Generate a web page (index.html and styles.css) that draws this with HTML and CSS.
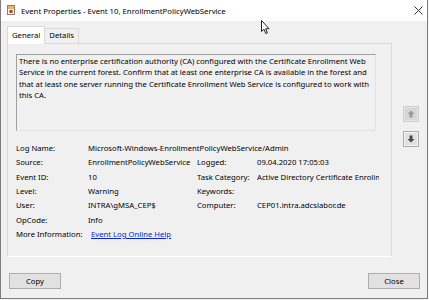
FILE: index.html
```html
<!DOCTYPE html>
<html lang="en">
<head>
    <meta charset="UTF-8">
    <meta name="viewport" content="width=device-width, initial-scale=1.0">
    <title>Event Properties</title>
    <link rel="stylesheet" href="styles.css">
</head>
<body>

<div class="window">
    <div class="title-bar">
        <svg class="title-icon" width="8" height="10" viewBox="0 0 8 10">
            <rect x="0.5" y="0.5" width="7" height="9" fill="#f4f1e6" stroke="#8a8070"/>
            <rect x="1" y="1" width="6" height="3" fill="#e8b84a"/>
            <circle cx="4" cy="6.5" r="1.8" fill="#d0342c"/>
        </svg>
        <span class="title-text">Event Properties - Event 10, EnrollmentPolicyWebService</span>
        <svg class="title-close" width="9" height="9" viewBox="0 0 9 9">
            <path d="M0.5 0.5 L8.5 8.5 M8.5 0.5 L0.5 8.5" stroke="#333" stroke-width="1"/>
        </svg>
    </div>

    <div class="client">
        <div class="main-row">
            <div class="tabs">
                <div class="tab-strip">
                    <div class="tab active">General</div>
                    <div class="tab">Details</div>
                </div>
                <div class="tab-page">
                    <div class="description">There is no enterprise certification authority (CA) configured with the Certificate Enrollment Web Service in the current forest. Confirm that at least one enterprise CA is available in the forest and that at least one server running the Certificate Enrollment Web Service is configured to work with this CA.</div>

                    <div class="fields">
                        <div class="label">Log Name:</div>
                        <div class="value wide">Microsoft-Windows-EnrollmentPolicyWebService/Admin</div>

                        <div class="label">Source:</div>
                        <div class="value">EnrollmentPolicyWebService</div>
                        <div class="label">Logged:</div>
                        <div class="value">09.04.2020 17:05:03</div>

                        <div class="label">Event ID:</div>
                        <div class="value">10</div>
                        <div class="label">Task Category:</div>
                        <div class="value">Active Directory Certificate Enrollment</div>

                        <div class="label">Level:</div>
                        <div class="value">Warning</div>
                        <div class="label">Keywords:</div>
                        <div class="value"></div>

                        <div class="label">User:</div>
                        <div class="value">INTRA\gMSA_CEP$</div>
                        <div class="label">Computer:</div>
                        <div class="value">CEP01.intra.adcslabor.de</div>

                        <div class="label">OpCode:</div>
                        <div class="value wide">Info</div>

                        <div class="label">More Information:</div>
                        <div class="value wide"><a class="help-link" href="#">Event Log Online Help</a></div>
                    </div>
                </div>
            </div>

            <div class="nav-buttons">
                <div class="nav-btn disabled">
                    <svg width="8" height="8" viewBox="0 0 8 8"><path d="M4 0.5 L7.5 4 L5.5 4 L5.5 7.5 L2.5 7.5 L2.5 4 L0.5 4 Z" fill="#9a9a9a"/></svg>
                </div>
                <div class="nav-btn">
                    <svg width="8" height="8" viewBox="0 0 8 8"><path d="M4 7.5 L7.5 4 L5.5 4 L5.5 0.5 L2.5 0.5 L2.5 4 L0.5 4 Z" fill="#4a4a4a"/></svg>
                </div>
            </div>
        </div>

        <div class="footer">
            <button class="btn">Copy</button>
            <button class="btn">Close</button>
        </div>
    </div>
</div>

<svg class="cursor" width="9" height="15" viewBox="0 0 9 15">
    <path d="M0.5 0.5 L0.5 11.5 L3 9.2 L4.8 13.6 L6.4 12.9 L4.7 8.7 L8 8.7 Z" fill="#fff" stroke="#222" stroke-width="1" stroke-linejoin="round"/>
</svg>

</body>
</html>
```
FILE: styles.css
```css
body {
    margin: 0;
    background-color: #f3f3f3;
    font-family: "Noto Sans", "Open Sans", sans-serif;
    font-size: 7.7px;
    color: #000;
}

.window {
    width: 426px;
    height: 298px;
    display: flex;
    flex-direction: column;
    background-color: #f0f0f0;
    border: 1px solid #7d7d7d;
    border-top: none;
}

/* Title bar */
.title-bar {
    height: 21px;
    flex: none;
    display: flex;
    align-items: center;
    background-color: #fff;
    padding: 0 4px 0 6px;
}

.title-icon {
    flex: none;
    margin-right: 6px;
    margin-top: -1px;
}

.title-text {
    flex: 1;
    font-size: 7.75px;
    white-space: nowrap;
}

.title-close {
    flex: none;
    margin-right: 0;
}

/* Client area */
.client {
    flex: 1;
    display: flex;
    flex-direction: column;
    padding: 5px 6px 0 6px;
}

.main-row {
    display: flex;
}

.tabs {
    width: 385px;
    flex: none;
}

.tab-strip {
    display: flex;
    align-items: flex-end;
    height: 17px;
}

.tab {
    height: 14px;
    line-height: 13px;
    padding: 0 4px;
    border: 1px solid #d9d9d9;
    border-bottom: none;
    margin-left: -1px;
    background-color: #f0f0f0;
    white-space: nowrap;
}

.tab.active {
    height: 17px;
    line-height: 16px;
    margin-left: 0;
    margin-bottom: -1px;
    background-color: #fff;
    position: relative;
    z-index: 1;
}

.tab-page {
    height: 214px;
    box-sizing: border-box;
    border: 1px solid #d9d9d9;
    border-bottom-color: #fff;
    padding: 10px 8px 0 8px;
}

.description {
    width: 360px;
    height: 77px;
    box-sizing: border-box;
    border: 1px solid #a0a0a0;
    border-right-color: #e3e3e3;
    border-bottom-color: #e3e3e3;
    background-color: #f0f0f0;
    padding: 1px 3px 0 2px;
    line-height: 11.45px;
}

.fields {
    display: grid;
    grid-template-columns: 72px 109px 60px 122px;
    grid-auto-rows: 14.3px;
    align-items: center;
    margin-top: 10px;
}

.label,
.value {
    white-space: nowrap;
    overflow: hidden;
}

.value.wide {
    grid-column: 2 / 5;
}

.help-link {
    color: #0026e6;
    margin-left: 3px;
}

/* Up / down buttons */
.nav-buttons {
    display: flex;
    flex-direction: column;
    gap: 9px;
    margin: 80px 0 0 11px;
}

.nav-btn {
    width: 16px;
    height: 16px;
    box-sizing: border-box;
    display: flex;
    align-items: center;
    justify-content: center;
    border: 1px solid #adadad;
    background-color: #e1e1e1;
    box-shadow: inset 0 0 0 1px #f4f4f4;
}

.nav-btn.disabled {
    border-color: #cdcdcd;
    background-color: #d6d6d6;
    box-shadow: inset 0 0 0 1px #e4e4e4;
}

/* Footer */
.footer {
    display: flex;
    justify-content: space-between;
    margin-top: 16px;
    padding: 0 1px 0 2px;
}

.btn {
    width: 52px;
    height: 16px;
    padding: 0;
    font-family: inherit;
    font-size: 7.7px;
    color: #000;
    background-color: #e1e1e1;
    border: 1px solid #adadad;
    border-radius: 0;
}

.cursor {
    position: absolute;
    left: 261px;
    top: 20px;
}
```
